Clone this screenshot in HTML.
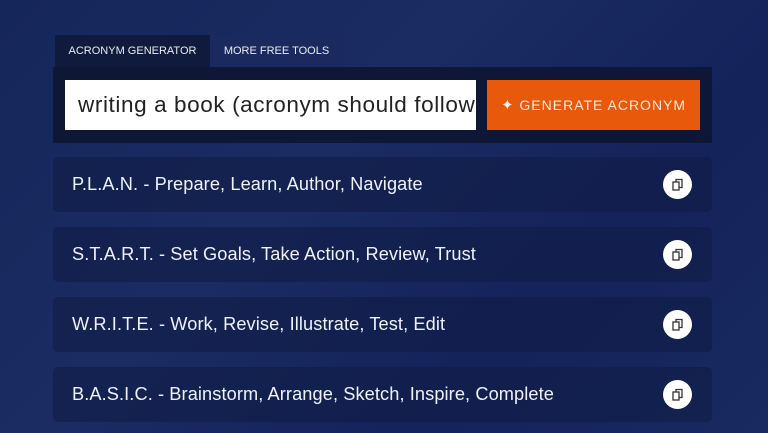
<!DOCTYPE html>
<html><head><style>
body{margin:0;width:768px;height:433px;overflow:hidden;background:#162657;font-family:"Liberation Sans","DejaVu Sans",sans-serif;position:relative}
.bg{position:absolute;inset:0;background:linear-gradient(135deg,#15265a 0%,#1a2c62 40%,#14235a 70%,#182a60 100%)}
.tab{position:absolute;top:35px;height:32px;font-size:11px;color:#e8ecf5;line-height:32px;text-align:center}
.panel{position:absolute;left:53px;top:67px;width:659px;height:76px;background:#0e1836}
.input{position:absolute;left:65px;top:80px;width:411px;height:50px;background:#fff;color:#222;font-size:22.5px;letter-spacing:0.6px;line-height:50px;padding-left:13px;box-sizing:border-box;white-space:nowrap;overflow:hidden}
.btn{position:absolute;left:487px;top:80px;width:213px;height:50px;background:#e8590c;color:#fbe9dc;font-size:14px;letter-spacing:1px;line-height:50px;text-align:center}
.row{position:absolute;left:53px;width:659px;height:55px;background:rgba(16,28,70,.6);border-radius:5px;color:#eef1f8;font-size:18.2px;letter-spacing:0.1px;line-height:55px;padding-left:19px;box-sizing:border-box}
.cp{position:absolute;right:20px;top:13px;width:29px;height:29px;border-radius:50%;background:#fff}
.cp svg{position:absolute;left:8px;top:8px}
</style></head><body>
<div class="bg"></div>
<div class="tab" style="left:55px;width:155px;background:#0f1a3c">ACRONYM GENERATOR</div>
<div class="tab" style="left:210px;width:133px;background:#1a2a5e">MORE FREE TOOLS</div>
<div class="panel"></div>
<div class="input">writing a book (acronym should follow</div>
<div class="btn"><span style="font-size:15px">✦</span> GENERATE ACRONYM</div>
<div class="row" style="top:157px">P.L.A.N. - Prepare, Learn, Author, Navigate<div class="cp"><svg width="13" height="13" viewBox="0 0 13 13"><rect x="2" y="4" width="6" height="8" fill="none" stroke="#333" stroke-width="1.3"/><path d="M5 4V1.5h6v8H8" fill="none" stroke="#333" stroke-width="1.3"/></svg></div></div>
<div class="row" style="top:227px">S.T.A.R.T. - Set Goals, Take Action, Review, Trust<div class="cp"><svg width="13" height="13" viewBox="0 0 13 13"><rect x="2" y="4" width="6" height="8" fill="none" stroke="#333" stroke-width="1.3"/><path d="M5 4V1.5h6v8H8" fill="none" stroke="#333" stroke-width="1.3"/></svg></div></div>
<div class="row" style="top:297px">W.R.I.T.E. - Work, Revise, Illustrate, Test, Edit<div class="cp"><svg width="13" height="13" viewBox="0 0 13 13"><rect x="2" y="4" width="6" height="8" fill="none" stroke="#333" stroke-width="1.3"/><path d="M5 4V1.5h6v8H8" fill="none" stroke="#333" stroke-width="1.3"/></svg></div></div>
<div class="row" style="top:367px">B.A.S.I.C. - Brainstorm, Arrange, Sketch, Inspire, Complete<div class="cp"><svg width="13" height="13" viewBox="0 0 13 13"><rect x="2" y="4" width="6" height="8" fill="none" stroke="#333" stroke-width="1.3"/><path d="M5 4V1.5h6v8H8" fill="none" stroke="#333" stroke-width="1.3"/></svg></div></div>
</body></html>
